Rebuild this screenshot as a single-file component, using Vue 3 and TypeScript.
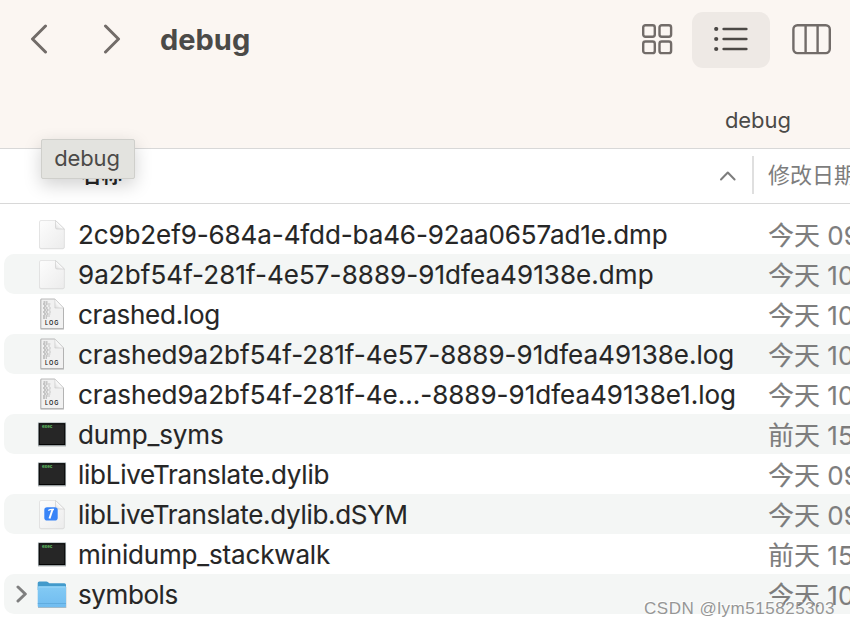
<script setup lang="ts">
type Kind = 'blank' | 'log' | 'exec' | 'dsym' | 'folder'

interface Entry {
  name: string
  kind: Kind
  date: string
  tracking: number
}

const entries: Entry[] = [
  { name: '2c9b2ef9-684a-4fdd-ba46-92aa0657ad1e.dmp', kind: 'blank', date: '今天 09:58', tracking: -0.1 },
  { name: '9a2bf54f-281f-4e57-8889-91dfea49138e.dmp', kind: 'blank', date: '今天 10:02', tracking: 0.06 },
  { name: 'crashed.log', kind: 'log', date: '今天 10:02', tracking: -0.25 },
  { name: 'crashed9a2bf54f-281f-4e57-8889-91dfea49138e.log', kind: 'log', date: '今天 10:02', tracking: 0.01 },
  { name: 'crashed9a2bf54f-281f-4e...-8889-91dfea49138e1.log', kind: 'log', date: '今天 10:02', tracking: 0.01 },
  { name: 'dump_syms', kind: 'exec', date: '前天 15:20', tracking: -0.12 },
  { name: 'libLiveTranslate.dylib', kind: 'exec', date: '今天 09:58', tracking: -0.25 },
  { name: 'libLiveTranslate.dylib.dSYM', kind: 'dsym', date: '今天 09:58', tracking: -0.3 },
  { name: 'minidump_stackwalk', kind: 'exec', date: '前天 15:20', tracking: -0.17 },
  { name: 'symbols', kind: 'folder', date: '今天 10:02', tracking: -0.4 },
]

// Tiny text lines shown on log documents: x, y, width
const logLines: number[][] = [
  [7.5, 4, 4], [7, 6, 5], [8, 8, 3], [7, 10, 5], [8, 12, 4], [7, 14, 5], [8, 16, 4], [7, 18, 5], [7, 20, 4],
]
</script>

<template>
  <div class="window">
    <header class="toolbar">
      <div class="bar">
        <nav class="history">
          <svg class="arrow" width="18" height="30" viewBox="0 0 18 30"><path d="M15.500 2 2.500 15l13 13" /></svg>
          <svg class="arrow" width="18" height="30" viewBox="0 0 18 30"><path d="M2.500 2l13 13-13 13" /></svg>
        </nav>
        <h1 class="title">debug</h1>
        <div class="views">
          <svg class="grid-icon" width="32" height="32" viewBox="0 0 32 32">
            <rect x="2.200" y="1.200" width="11.600" height="11.600" rx="2.200" />
            <rect x="18.500" y="1.200" width="11.600" height="11.600" rx="2.200" />
            <rect x="2.200" y="17.500" width="11.600" height="11.600" rx="2.200" />
            <rect x="18.500" y="17.500" width="11.600" height="11.600" rx="2.200" />
          </svg>
          <div class="selected">
            <svg class="list-icon" width="36" height="26" viewBox="0 0 36 26">
              <circle cx="3.200" cy="2" r="2.100" /><circle cx="3.200" cy="12" r="2.100" /><circle cx="3.200" cy="22" r="2.100" />
              <path d="M10.700 2h22.600M10.700 12h22.600M10.700 22h22.600" />
            </svg>
          </div>
          <svg class="columns-icon" width="40" height="32" viewBox="0 0 40 32">
            <rect x="1.400" y="1.200" width="36.400" height="27.900" rx="4" />
            <path d="M13.600 1.500v27.500M25.600 1.500v27.500" />
          </svg>
        </div>
      </div>
      <div class="tab">debug</div>
    </header>

    <div class="columns">
      <span class="col-name">名称</span>
      <svg class="sort" width="18" height="12" viewBox="0 0 18 12"><path d="M2 9.500 8.800 2.500 15.600 9.500" /></svg>
      <span class="divider"></span>
      <span class="col-date">修改日期</span>
    </div>

    <ul class="files">
      <li v-for="entry in entries" :key="entry.name" class="row">
        <span class="disclosure">
          <svg v-if="entry.kind === 'folder'" width="12" height="18" viewBox="0 0 12 18"><path d="M2 2l7.300 7L2 16" /></svg>
        </span>
        <svg class="icon" width="32" height="34" viewBox="0 0 32 34">
          <defs>
            <linearGradient id="paper" x1="0" y1="0" x2="1" y2="1">
              <stop offset="0" stop-color="#fdfdfd" /><stop offset="1" stop-color="#ececec" />
            </linearGradient>
            <linearGradient id="fold" x1="0" y1="1" x2="1" y2="0">
              <stop offset="0" stop-color="#dcdcdc" /><stop offset=".5" stop-color="#ffffff" /><stop offset="1" stop-color="#ffffff" />
            </linearGradient>
            <linearGradient id="folder-front" x1="0" y1="0" x2="0" y2="1">
              <stop offset="0" stop-color="#83caf4" /><stop offset="1" stop-color="#70bcf0" />
            </linearGradient>
          </defs>
          <g v-if="entry.kind === 'blank' || entry.kind === 'dsym'">
            <path class="paper-shadow" d="M5 3h15.500l8 8v18.500q0 1.800-1.800 1.800H5q-1.600 0-1.600-1.800V4.800Q3.400 3 5 3z" />
            <path class="paper" d="M5 2.500h14.500l8.800 8.500V29q0 1.500-1.500 1.500H5q-1.500 0-1.500-1.500V4Q3.500 2.500 5 2.500z" />
            <path class="fold" d="M19.500 2.500V9.500q0 1.500 1.500 1.500h7.300z" />
            <template v-if="entry.kind === 'dsym'">
              <rect class="app" x="8.300" y="9.200" width="13.400" height="13.400" rx="2.800" />
              <path class="hammer" d="M16.500 11.500l-3 9" />
              <path class="hammer-head" d="M12.300 12.500q2-1.500 5.700-1" />
            </template>
          </g>
          <g v-else-if="entry.kind === 'log'">
            <path class="log-shadow" d="M4.500 1.800h14.500l8.900 9.200v20.600H4.500z" />
            <path class="log-paper" d="M4.900 1h14l8.600 9v20.600H4.900z" />
            <path v-for="(line, i) in logLines" :key="i" class="log-line" :d="`M${line[0]} ${line[1]}h${line[2]}`" />
            <path class="log-line light" d="M12 6h3M12 8h2M13 10h2M12 12h3M13 14h2M12 16h3M12 18h2" />
            <path class="fold" d="M18.900 1v9h8.600z" />
            <text class="log-label" x="9" y="27" textLength="13.500">LOG</text>
          </g>
          <g v-else-if="entry.kind === 'exec'">
            <rect class="exec-shadow" x="2" y="6.500" width="28" height="22" />
            <rect class="exec-frame" x="2.200" y="4.800" width="27.600" height="22.700" />
            <rect class="exec-screen" x="3.700" y="6.300" width="24.600" height="19.700" />
            <text class="exec-label" x="6" y="10.200" textLength="10.500">exec</text>
          </g>
          <g v-else>
            <path class="folder-shadow" d="M2 9h28.300v21H2z" />
            <path class="folder-back" d="M1.700 5q0-1.600 1.600-1.600h6.900q1.200 0 2.200 1l1 .8h15q1.600 0 1.600 1.600V12H1.700z" />
            <path class="folder-front" d="M1.700 9.500q0-1.200 1.200-1.200h26Q30 8.300 30 9.500v18.500q0 1.200-1.200 1.200H2.900q-1.200 0-1.200-1.200z" />
            <path class="folder-lip" d="M2.500 9h27" />
            <path class="folder-base" d="M1.800 25.500h28.200" />
          </g>
        </svg>
        <span class="name" :style="{ letterSpacing: `${entry.tracking}px` }">{{ entry.name }}</span>
        <span class="date">{{ entry.date }}</span>
      </li>
    </ul>

    <div class="tooltip">debug</div>
    <div class="watermark">CSDN @lym515825303</div>
  </div>
</template>

<style>
body {
  margin: 0;
  overflow: hidden;
}
</style>

<style scoped>
.window {
  position: relative;
  width: 850px;
  height: 628px;
  overflow: hidden;
  background: #fff;
  color: #262626;
  font-family: Inter, "Noto Sans CJK SC", sans-serif;
  white-space: nowrap;
}
.toolbar {
  box-sizing: border-box;
  height: 149px;
  background: #fbf6f2;
  border-bottom: 1px solid #d8d8d8;
}
.bar {
  display: flex;
  align-items: center;
  height: 56px;
  padding: 12px 0 0 30px;
  width: 820px;
}
.history {
  display: flex;
  gap: 55px;
  margin-top: -2px;
}
.arrow {
  fill: none;
  stroke: #726c69;
  stroke-width: 3;
  stroke-linecap: round;
  stroke-linejoin: round;
}
.title {
  margin: 0 0 0 39px;
  width: 100px;
  font-size: 29px;
  line-height: 40px;
  font-weight: 700;
  color: #4b4a48;
}
.views {
  display: flex;
  align-items: center;
  margin-left: auto;
  padding-right: 18px;
}
.views > svg {
  fill: none;
  stroke: #726c69;
  stroke-width: 2.400;
}
.grid-icon {
  margin-right: 19px;
}
.columns-icon {
  margin-left: 22px;
}
.selected {
  display: flex;
  align-items: center;
  justify-content: center;
  width: 78px;
  height: 56px;
  border-radius: 11px;
  background: #eee9e5;
}
.list-icon {
  fill: #4b4845;
  stroke: none;
}
.list-icon path {
  stroke: #4b4845;
  stroke-width: 2.700;
  stroke-linecap: round;
}
.tab {
  margin-top: 37px;
  padding-left: 725px;
  font-size: 22px;
  line-height: 30px;
  letter-spacing: -.1px;
  color: #4b4a48;
}
.columns {
  display: flex;
  align-items: center;
  box-sizing: border-box;
  height: 55px;
  padding-left: 81px;
  border-bottom: 1px solid #d8d8d8;
  font-size: 22px;
}
.col-name {
  flex: none;
  width: 638px;
  padding-bottom: 5px;
  font-weight: 700;
  font-size: 20.500px;
}
.sort {
  flex: none;
  fill: none;
  stroke: #7d7d7d;
  stroke-width: 2;
  stroke-linecap: round;
  stroke-linejoin: round;
}
.divider {
  flex: none;
  width: 2px;
  height: 38px;
  margin: 0 14px 2px 15px;
  background: #dfdfdf;
}
.col-date {
  padding-bottom: 7px;
  color: #7d7d7d;
}
.files {
  margin: 0;
  padding: 10px 0 0 4px;
  list-style: none;
}
.row {
  display: flex;
  align-items: center;
  height: 40px;
  border-radius: 10px 0 0 10px;
  font-size: 26px;
}
.row:nth-child(even) {
  background: #f4f6f5;
}
.disclosure {
  display: flex;
  flex: none;
  width: 20px;
  padding-left: 12px;
}
.disclosure svg {
  fill: none;
  stroke: #7f7f7f;
  stroke-width: 3;
  stroke-linecap: round;
  stroke-linejoin: round;
}
.icon {
  flex: none;
  margin-top: 2px;
}
.name {
  flex: none;
  width: 690px;
  margin-left: 10px;
  -webkit-text-stroke: .12px #262626;
}
.date {
  padding-bottom: 2px;
  color: #7d7d7d;
  -webkit-text-stroke: .1px #7d7d7d;
}
.paper { fill: url(#paper); stroke: #dddddd; stroke-width: .7; }
.paper-shadow { fill: #cbcbcb; opacity: .6; }
.fold { fill: url(#fold); stroke: #c8c8c8; stroke-width: .6; }
.log-paper { fill: #f1f1f1; stroke: #aaaaaa; stroke-width: .8; }
.log-shadow { fill: #777777; opacity: .55; }
.log-line { fill: none; stroke: #999999; stroke-width: 1; stroke-dasharray: 2 .6; }
.light { stroke: #c2c2c2; }
.log-label { font: 600 5.600px Inter, sans-serif; fill: #222; }
.app { fill: #3984f7; }
.hammer { stroke: #fff; stroke-width: 2; fill: none; }
.hammer-head { stroke: #fff; stroke-width: 1.300; fill: none; }
.exec-shadow { fill: #777; opacity: .5; }
.exec-frame { fill: #050505; stroke: #c3d0d4; stroke-width: .6; }
.exec-screen { fill: #262626; }
.exec-label { font: 700 4.500px "Liberation Mono", monospace; fill: #62c465; }
.folder-shadow { fill: #6b7d89; opacity: .5; }
.folder-back { fill: #429acb; }
.folder-front { fill: url(#folder-front); }
.folder-lip { stroke: #9bd8f8; stroke-width: 1; }
.folder-base { stroke: #60acdf; stroke-width: 1; }
.tooltip {
  position: absolute;
  left: 41px;
  top: 139px;
  box-sizing: border-box;
  width: 94px;
  height: 40px;
  padding-right: 2px;
  border: 1px solid #cfcfcb;
  border-radius: 2px;
  background: #e3e3df;
  box-shadow: 0 6px 18px rgba(0, 0, 0, .18);
  color: #4b4a48;
  font-size: 22px;
  line-height: 36px;
  letter-spacing: -.15px;
  text-align: center;
}
.watermark {
  position: absolute;
  left: 644px;
  top: 598px;
  font: 17px/22px "Liberation Sans", sans-serif;
  letter-spacing: .52px;
  color: #969696;
  text-shadow: -1px -1px 0 #fff;
}
</style>
